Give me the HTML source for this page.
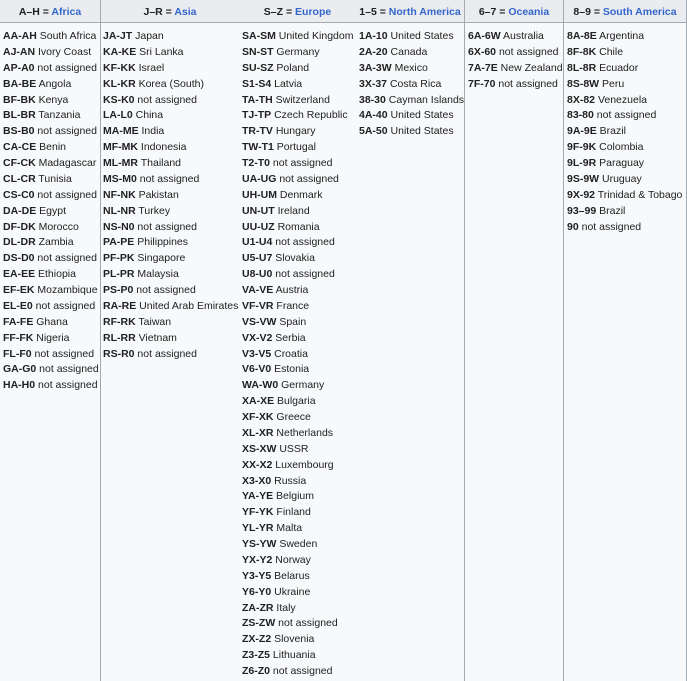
<!DOCTYPE html>
<html><head><style>
html,body{margin:0;padding:0;background:#f8f9fa;}
body{width:687px;height:681px;overflow:hidden;position:relative;font-family:"Liberation Sans",Arial,sans-serif;font-size:10.5px;color:#202122;}
.hdr{position:absolute;left:0;top:0;width:686px;height:22px;background:#eaecf0;border-bottom:1px solid #a2a9b1;}
.vl{position:absolute;top:0;width:1px;height:681px;background:#a2a9b1;}
.h{position:absolute;top:6px;font-weight:bold;text-align:center;line-height:13px;}
.h a{color:#3366cc;text-decoration:none;}
.col{position:absolute;top:29px;line-height:15.875px;white-space:nowrap;}
</style></head><body>
<div class="hdr"></div>
<div class="vl" style="left:100px"></div>
<div class="vl" style="left:464px"></div>
<div class="vl" style="left:563px"></div>
<div class="vl" style="left:686px"></div>
<div class="h" style="left:0;width:100px">A–H = <a>Africa</a></div>
<div class="h" style="left:101px;width:138px">J–R = <a>Asia</a></div>
<div class="h" style="left:239px;width:117px">S–Z = <a>Europe</a></div>
<div class="h" style="left:356px;width:108px">1–5 = <a>North America</a></div>
<div class="h" style="left:465px;width:98px">6–7 = <a>Oceania</a></div>
<div class="h" style="left:564px;width:122px">8–9 = <a>South America</a></div>

<div class="col" style="left:3px">
<b>AA-AH</b> South Africa<br><b>AJ-AN</b> Ivory Coast<br><b>AP-A0</b> not assigned<br><b>BA-BE</b> Angola<br><b>BF-BK</b> Kenya<br><b>BL-BR</b> Tanzania<br><b>BS-B0</b> not assigned<br><b>CA-CE</b> Benin<br><b>CF-CK</b> Madagascar<br><b>CL-CR</b> Tunisia<br><b>CS-C0</b> not assigned<br><b>DA-DE</b> Egypt<br><b>DF-DK</b> Morocco<br><b>DL-DR</b> Zambia<br><b>DS-D0</b> not assigned<br><b>EA-EE</b> Ethiopia<br><b>EF-EK</b> Mozambique<br><b>EL-E0</b> not assigned<br><b>FA-FE</b> Ghana<br><b>FF-FK</b> Nigeria<br><b>FL-F0</b> not assigned<br><b>GA-G0</b> not assigned<br><b>HA-H0</b> not assigned
</div>
<div class="col" style="left:103px">
<b>JA-JT</b> Japan<br><b>KA-KE</b> Sri Lanka<br><b>KF-KK</b> Israel<br><b>KL-KR</b> Korea (South)<br><b>KS-K0</b> not assigned<br><b>LA-L0</b> China<br><b>MA-ME</b> India<br><b>MF-MK</b> Indonesia<br><b>ML-MR</b> Thailand<br><b>MS-M0</b> not assigned<br><b>NF-NK</b> Pakistan<br><b>NL-NR</b> Turkey<br><b>NS-N0</b> not assigned<br><b>PA-PE</b> Philippines<br><b>PF-PK</b> Singapore<br><b>PL-PR</b> Malaysia<br><b>PS-P0</b> not assigned<br><b>RA-RE</b> United Arab Emirates<br><b>RF-RK</b> Taiwan<br><b>RL-RR</b> Vietnam<br><b>RS-R0</b> not assigned
</div>
<div class="col" style="left:242px">
<b>SA-SM</b> United Kingdom<br><b>SN-ST</b> Germany<br><b>SU-SZ</b> Poland<br><b>S1-S4</b> Latvia<br><b>TA-TH</b> Switzerland<br><b>TJ-TP</b> Czech Republic<br><b>TR-TV</b> Hungary<br><b>TW-T1</b> Portugal<br><b>T2-T0</b> not assigned<br><b>UA-UG</b> not assigned<br><b>UH-UM</b> Denmark<br><b>UN-UT</b> Ireland<br><b>UU-UZ</b> Romania<br><b>U1-U4</b> not assigned<br><b>U5-U7</b> Slovakia<br><b>U8-U0</b> not assigned<br><b>VA-VE</b> Austria<br><b>VF-VR</b> France<br><b>VS-VW</b> Spain<br><b>VX-V2</b> Serbia<br><b>V3-V5</b> Croatia<br><b>V6-V0</b> Estonia<br><b>WA-W0</b> Germany<br><b>XA-XE</b> Bulgaria<br><b>XF-XK</b> Greece<br><b>XL-XR</b> Netherlands<br><b>XS-XW</b> USSR<br><b>XX-X2</b> Luxembourg<br><b>X3-X0</b> Russia<br><b>YA-YE</b> Belgium<br><b>YF-YK</b> Finland<br><b>YL-YR</b> Malta<br><b>YS-YW</b> Sweden<br><b>YX-Y2</b> Norway<br><b>Y3-Y5</b> Belarus<br><b>Y6-Y0</b> Ukraine<br><b>ZA-ZR</b> Italy<br><b>ZS-ZW</b> not assigned<br><b>ZX-Z2</b> Slovenia<br><b>Z3-Z5</b> Lithuania<br><b>Z6-Z0</b> not assigned
</div>
<div class="col" style="left:359px">
<b>1A-10</b> United States<br><b>2A-20</b> Canada<br><b>3A-3W</b> Mexico<br><b>3X-37</b> Costa Rica<br><b>38-30</b> Cayman Islands<br><b>4A-40</b> United States<br><b>5A-50</b> United States
</div>
<div class="col" style="left:468px">
<b>6A-6W</b> Australia<br><b>6X-60</b> not assigned<br><b>7A-7E</b> New Zealand<br><b>7F-70</b> not assigned
</div>
<div class="col" style="left:567px">
<b>8A-8E</b> Argentina<br><b>8F-8K</b> Chile<br><b>8L-8R</b> Ecuador<br><b>8S-8W</b> Peru<br><b>8X-82</b> Venezuela<br><b>83-80</b> not assigned<br><b>9A-9E</b> Brazil<br><b>9F-9K</b> Colombia<br><b>9L-9R</b> Paraguay<br><b>9S-9W</b> Uruguay<br><b>9X-92</b> Trinidad &amp; Tobago<br><b>93–99</b> Brazil<br><b>90</b> not assigned
</div>
</body></html>
